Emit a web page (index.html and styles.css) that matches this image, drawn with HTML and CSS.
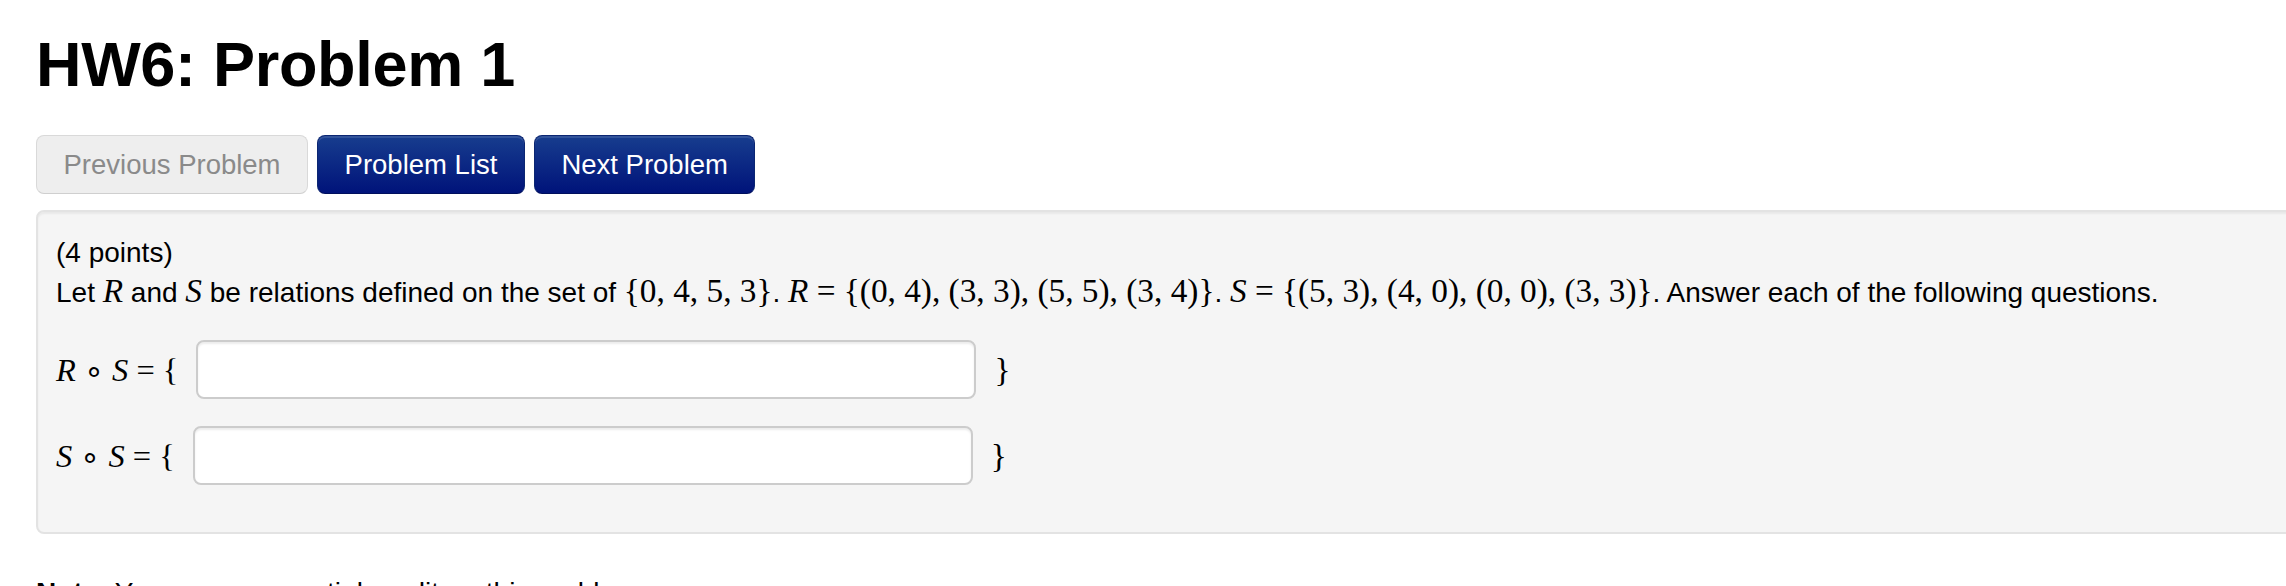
FILE: index.html
```html
<!DOCTYPE html>
<html lang="en">
  <head>
    <meta charset="UTF-8" />
    <meta name="viewport" content="width=device-width, initial-scale=1.0" />
    <title>HW6: Problem 1</title>
    <link rel="stylesheet" href="styles.css">
  </head>

  <body>
    <div class="page">
      <h1 class="title">HW6: Problem 1</h1>

      <div class="nav">
        <span class="btn btn-disabled">Previous Problem</span>
        <a class="btn btn-primary" href="#">Problem List</a>
        <a class="btn btn-primary" href="#">Next Problem</a>
      </div>

      <div class="problem">
        <p class="points">(4 points)</p>
        <p class="statement">
          Let <span class="m"><i>R</i></span> and <span class="m"><i>S</i></span> be relations defined on the set of
          <span class="m">{0, 4, 5, 3}</span>. <span class="m"><i>R</i> = {(0, 4), (3, 3), (5, 5), (3, 4)}</span>.
          <span class="m"><i>S</i> = {(5, 3), (4, 0), (0, 0), (3, 3)}</span>. Answer each of the following questions.
        </p>

        <div class="answer-row">
          <span class="m label"><i>R</i> ∘ <i>S</i> = {</span>
          <input class="answer" type="text">
          <span class="m">}</span>
        </div>

        <div class="answer-row">
          <span class="m label"><i>S</i> ∘ <i>S</i> = {</span>
          <input class="answer" type="text">
          <span class="m">}</span>
        </div>
      </div>

      <p class="note"><b>Note:</b> You can earn partial credit on this problem.</p>
    </div>
  </body>
</html>
```

FILE: styles.css
```css
* {
  margin: 0;
  padding: 0;
  box-sizing: border-box;
}

html,
body {
  overflow: hidden;
}

body {
  background-color: #fff;
  color: #000;
  font-family: "Liberation Sans", Arial, Helvetica, sans-serif;
  font-size: 28px;
  line-height: 38px;
}

.page {
  padding: 30px 0 0 36px;
}

.title {
  font-size: 63px;
  line-height: 68px;
  font-weight: bold;
  letter-spacing: -0.3px;
  color: #000;
}

.nav {
  display: flex;
  gap: 9px;
  margin-top: 37px;
}

.btn {
  display: inline-block;
  height: 59px;
  padding: 8px 26.5px;
  line-height: 41px;
  font-size: 27.5px;
  border-radius: 8px;
  border: 1px solid;
  text-decoration: none;
}

.btn-disabled {
  background-color: #eeeeee;
  border-color: #d9d9d9 #d9d9d9 #cfcfcf;
  color: #8a8a8a;
}

.btn-primary {
  background: linear-gradient(#173d8e, #00137a);
  border-color: #0b2672 #0b2672 #000f5c;
  color: #fff;
  box-shadow: inset 0 2px 0 rgba(255, 255, 255, 0.12);
}

.problem {
  margin: 16px -120px 0 0;
  padding: 22px 18px 47px;
  background-color: #f5f5f5;
  border: 2px solid #e3e3e3;
  border-radius: 8px;
  box-shadow: inset 0 2px 2px rgba(0, 0, 0, 0.05);
}

.m {
  font-family: "Liberation Serif", "Times New Roman", serif;
  font-size: 1.19em;
  color: #000;
}

.m i {
  font-style: italic;
}

.answer-row {
  display: flex;
  align-items: center;
  gap: 18px;
  margin-top: 28px;
}

.answer-row .label {
  font-size: 1.16em;
}

.answer-row + .answer-row {
  margin-top: 27px;
}

.answer {
  width: 780px;
  height: 59px;
  background-color: #fff;
  border: 2px solid #cccccc;
  border-radius: 8px;
  box-shadow: inset 0 2px 2px rgba(0, 0, 0, 0.075);
  font-size: 27px;
  padding: 0 12px;
}

.note {
  margin-top: 40px;
}
```
